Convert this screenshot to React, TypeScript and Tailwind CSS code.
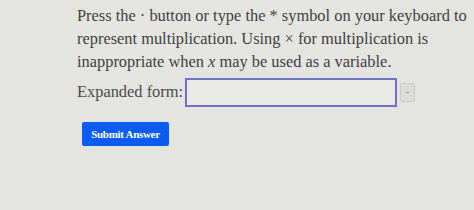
import React from 'react';

export default function App() {
  return (
    <div
      className="w-[474px] h-[210px] overflow-hidden bg-[#e4e4e1] text-[#3f3f3f]"
      style={{ fontFamily: '"Liberation Serif", "Times New Roman", serif' }}
    >
      <div className="pl-[77px] pr-1 pt-[4px]">
        <p className="text-[16.4px] leading-[23px] whitespace-nowrap">
          Press the · button or type the * symbol on your keyboard to
          <br />
          represent multiplication. Using × for multiplication is
          <br />
          inappropriate when <i>x</i> may be used as a variable.
        </p>
        <div className="mt-[5px] flex items-center">
          <span className="text-[16.4px] text-[#4a4a4a]">Expanded form:</span>
          <div className="ml-[2px] h-[29px] w-[212px] border-2 border-[#7071cc] bg-[#e9e9e6]" />
          <button className="ml-[3px] flex h-[19px] w-[15px] items-center justify-center rounded-[2px] border border-[#c9c9c6] bg-[#dcdcd9]">
            <span className="h-[1px] w-[3px] bg-[#999]" />
          </button>
        </div>
        <button className="ml-[5px] mt-[15px] h-[24px] w-[87px] rounded-[2px] bg-[#0a5cf2] text-[11px] font-bold text-white tracking-[-0.3px]">
          Submit Answer
        </button>
      </div>
    </div>
  );
}
